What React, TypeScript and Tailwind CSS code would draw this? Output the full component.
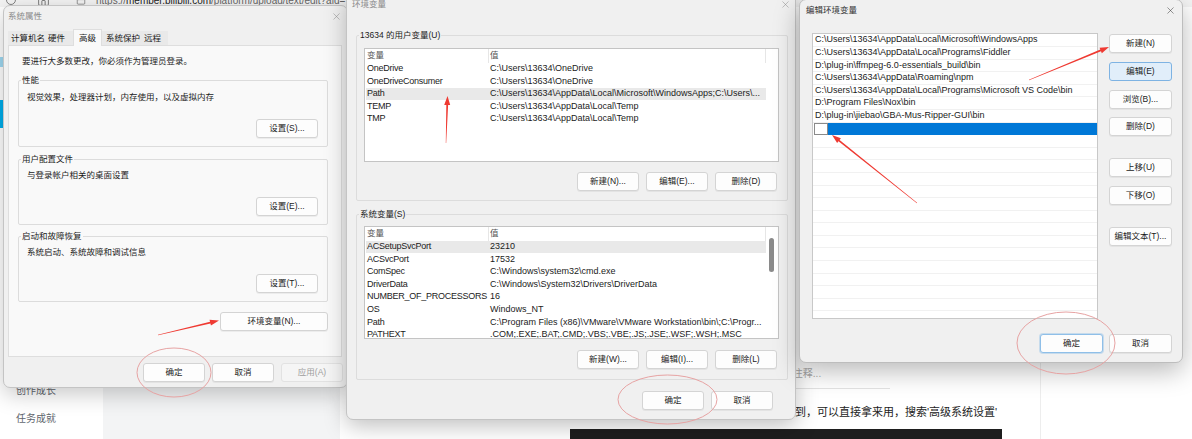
import React from "react";
import { X, RotateCw, Home, Lock } from "lucide-react";

type Pt = [number, number];

function arrowPoints(a: Pt, b: Pt, head = 9, headW = 6, tailW = 0.4, shaftW = 1.8) {
  const dx = b[0] - a[0];
  const dy = b[1] - a[1];
  const len = Math.hypot(dx, dy);
  const ux = dx / len;
  const uy = dy / len;
  const nx = -uy;
  const ny = ux;
  const bx = b[0] - ux * head;
  const by = b[1] - uy * head;
  const p = (x: number, y: number) => `${x.toFixed(2)},${y.toFixed(2)}`;
  return [
    p(a[0] + (nx * tailW) / 2, a[1] + (ny * tailW) / 2),
    p(bx + (nx * shaftW) / 2, by + (ny * shaftW) / 2),
    p(bx + (nx * headW) / 2, by + (ny * headW) / 2),
    p(b[0], b[1]),
    p(bx - (nx * headW) / 2, by - (ny * headW) / 2),
    p(bx - (nx * shaftW) / 2, by - (ny * shaftW) / 2),
    p(a[0] - (nx * tailW) / 2, a[1] - (ny * tailW) / 2),
  ].join(" ");
}

type BtnKind = "default" | "disabled" | "focus" | "active";

function Btn({ className, kind = "default", children }: { className: string; kind?: BtnKind; children: React.ReactNode }) {
  const base = "flex h-[19px] shrink-0 items-center justify-center rounded-[3px] border text-[8.5px] leading-none";
  const styles: Record<BtnKind, string> = {
    default: "border-[#d4d4d4] bg-[#fdfdfd] text-[#1b1b1b] shadow-[0_1px_0_rgba(0,0,0,0.05)]",
    disabled: "border-[#e2e2e2] bg-[#f5f5f5] text-[#9d9d9d]",
    focus: "border-[#8fbfe8] bg-[#fdfdfd] text-[#1b1b1b] shadow-[0_0_0_1px_rgba(120,180,230,0.35)]",
    active: "border-[#7eb3e3] bg-[#e1eefa] text-[#1b1b1b]",
  };
  return <div className={`${base} ${styles[kind]} ${className}`}>{children}</div>;
}

function Group({ label, className, children }: { label: string; className: string; children: React.ReactNode }) {
  return (
    <fieldset className={`rounded-[2px] border border-[#dcdcdc] ${className}`}>
      <legend className="ml-[2px] px-[1px] text-[8.5px] leading-[12px] text-[#1b1b1b]">{label}</legend>
      {children}
    </fieldset>
  );
}

function CloseX({ className }: { className: string }) {
  return <X className={className} size={11} strokeWidth={1.1} />;
}

const userRows: [string, string][] = [
  ["OneDrive", "C:\\Users\\13634\\OneDrive"],
  ["OneDriveConsumer", "C:\\Users\\13634\\OneDrive"],
  ["Path", "C:\\Users\\13634\\AppData\\Local\\Microsoft\\WindowsApps;C:\\Users\\..."],
  ["TEMP", "C:\\Users\\13634\\AppData\\Local\\Temp"],
  ["TMP", "C:\\Users\\13634\\AppData\\Local\\Temp"],
];

const sysRows: [string, string][] = [
  ["ACSetupSvcPort", "23210"],
  ["ACSvcPort", "17532"],
  ["ComSpec", "C:\\Windows\\system32\\cmd.exe"],
  ["DriverData", "C:\\Windows\\System32\\Drivers\\DriverData"],
  ["NUMBER_OF_PROCESSORS", "16"],
  ["OS", "Windows_NT"],
  ["Path", "C:\\Program Files (x86)\\VMware\\VMware Workstation\\bin\\;C:\\Progr..."],
  ["PATHEXT", ".COM;.EXE;.BAT;.CMD;.VBS;.VBE;.JS;.JSE;.WSF;.WSH;.MSC"],
];

const paths = [
  "C:\\Users\\13634\\AppData\\Local\\Microsoft\\WindowsApps",
  "C:\\Users\\13634\\AppData\\Local\\Programs\\Fiddler",
  "D:\\plug-in\\ffmpeg-6.0-essentials_build\\bin",
  "C:\\Users\\13634\\AppData\\Roaming\\npm",
  "C:\\Users\\13634\\AppData\\Local\\Programs\\Microsoft VS Code\\bin",
  "D:\\Program Files\\Nox\\bin",
  "D:\\plug-in\\jiebao\\GBA-Mus-Ripper-GUI\\bin",
];

function VarList({ rows, selected, className, scroll }: { rows: [string, string][]; selected: number; className: string; scroll?: boolean }) {
  return (
    <div className={`relative overflow-hidden border border-[#c4c4c4] bg-white text-[9px] ${className}`}>
      <div className="ml-[1px] flex h-[13.5px] w-[400px] items-stretch text-[8.5px] text-[#555]">
        <div className="flex w-[123px] items-center border-r border-[#e6e6e6] pl-[1px]">变量</div>
        <div className="flex flex-1 items-center border-r border-[#e6e6e6] pl-[1px]">值</div>
      </div>
      {rows.map((r, i) => (
        <div key={i} className={`ml-[1px] flex h-[12.6px] w-[400px] items-center text-[#1b1b1b] ${i === selected ? "bg-[#e9e9e9]" : ""}`}>
          <div className="w-[123px] overflow-hidden whitespace-nowrap pl-[1px] tracking-[-0.25px]">{r[0]}</div>
          <div className="flex-1 overflow-hidden whitespace-nowrap pl-[1px]">{r[1]}</div>
        </div>
      ))}
      {scroll ? <div className="absolute right-[4px] top-[11px] h-[34px] w-[5px] rounded-full bg-[#8a8a8a]" /> : null}
    </div>
  );
}

export default function App() {
  const red = "#ef3a32";
  const ring = "#e7a3a3";
  return (
    <div className="relative h-[439px] w-[1192px] overflow-hidden bg-white font-['Liberation_Sans','Noto_Sans_CJK_SC',sans-serif]">
      {/* background web page */}
      <div className="flex h-full flex-col">
        <div className="h-[7px] shrink-0 overflow-hidden bg-[#f4f4f4]">
          <div className="-mt-[8px] flex h-[16px] items-center text-[#555]">
            <RotateCw className="ml-[5px]" size={12} strokeWidth={1.4} />
            <Home className="ml-[20px]" size={13} strokeWidth={1.4} />
            <Lock className="ml-[26px]" size={10} strokeWidth={1.4} />
            <span className="ml-[10px] whitespace-nowrap text-[10px] text-[#666]">
              https://<span className="text-[#222]">member.bilibili.com</span>/platform/upload/text/edit?aid=
            </span>
          </div>
        </div>
        <div className="flex min-h-0 flex-1 overflow-hidden">
          <aside className="flex w-[103px] shrink-0 flex-col bg-white text-[10px] text-[#61666d]">
            <div className="mt-[50px] h-[10px] w-[40px] bg-[#9fd9f2]" />
            <div className="mt-[33px] h-[28px] w-[103px] bg-[#00aeec]" />
            <div className="flex-1" />
            <div className="flex h-[28px] items-center justify-between pl-[16px] pr-[20px]">
              <span>创作成长</span>
              <span className="text-[8px] text-[#999]">ˇ</span>
            </div>
            <div className="mb-[7px] flex h-[28px] items-center pl-[16px]">任务成就</div>
          </aside>
          <main className="min-w-0 flex-1 overflow-hidden bg-[#f3f4f5] pl-[237px]">
            <div className="h-full w-[700px] bg-white pl-[230px]">
              <div className="flex w-[470px] flex-col pt-[360px]">
                <div className="pr-[16px] text-center text-[10px] leading-[14px] text-[#aaa]">添加注释...</div>
                <div className="mx-auto mt-[7px] h-px w-[170px] bg-[#e3e3e3]" />
                <p className="mt-[15px] whitespace-nowrap pl-[225px] text-[11px] leading-[16px] text-[#222]">到，可以直接拿来用，搜索'高级系统设置'</p>
                <div className="mt-[9px] h-[20px] w-[432px] bg-[#1e1e1e]" />
              </div>
            </div>
          </main>
          <div className="w-[152px] shrink-0 border-l border-[#ededed] bg-white" />
        </div>
      </div>

      {/* Window 1: 系统属性 */}
      <div className="absolute left-[3px] top-[5px] flex h-[383px] w-[345px] flex-col rounded-[7px] border border-[#c4c4c4] bg-[#f0f0f0] shadow-[0_6px_22px_rgba(0,0,0,0.22)]">
        <div className="flex h-[20px] shrink-0 items-center justify-between pl-[4px] pr-[5px]">
          <span className="text-[8.5px] text-[#8a8a8a]">系统属性</span>
          <CloseX className="text-[#8a8a8a]" />
        </div>
        <div className="ml-[4px] mt-[3px] flex h-[16px] items-end text-[8.5px] text-[#1b1b1b]">
          <div className="flex h-[14px] items-end bg-[#e9e9e9]">
            <div className="flex h-[14px] w-[39px] items-center pl-[3px]">计算机名</div>
            <div className="flex h-[14px] w-[26px] items-center pl-[1px]">硬件</div>
          </div>
          <div className="relative z-10 -mb-px flex h-[17px] w-[29px] items-center justify-center border-x border-t border-[#dedede] bg-[#f9f9f9]">高级</div>
          <div className="flex h-[14px] items-end bg-[#e9e9e9]">
            <div className="flex h-[14px] w-[40px] items-center pl-[4px]">系统保护</div>
            <div className="flex h-[14px] w-[26px] items-center pl-[2px]">远程</div>
          </div>
        </div>
        <div className="ml-[4px] mr-[5px] flex h-[312px] flex-col border border-[#dedede] bg-[#f9f9f9] pl-[9px] pr-[13px] pt-[10px] text-[8.5px] text-[#1b1b1b]">
          <p className="ml-[4px] leading-[11px]">要进行大多数更改，你必须作为管理员登录。</p>
          <Group label="性能" className="mt-[7px] pb-[8px]">
            <p className="ml-[8px] mt-[6px] leading-[11px]">视觉效果，处理器计划，内存使用，以及虚拟内存</p>
            <div className="mr-[9px] mt-[16px] flex justify-end">
              <Btn className="w-[62px]">设置(S)...</Btn>
            </div>
          </Group>
          <Group label="用户配置文件" className="mt-[6px] pb-[8px]">
            <p className="ml-[8px] mt-[5px] leading-[11px]">与登录帐户相关的桌面设置</p>
            <div className="mr-[9px] mt-[16px] flex justify-end">
              <Btn className="w-[62px]">设置(E)...</Btn>
            </div>
          </Group>
          <Group label="启动和故障恢复" className="mt-[5px] pb-[8px]">
            <p className="ml-[8px] mt-[5px] leading-[11px]">系统启动、系统故障和调试信息</p>
            <div className="mr-[9px] mt-[16px] flex justify-end">
              <Btn className="w-[62px]">设置(T)...</Btn>
            </div>
          </Group>
          <div className="mt-[10px] flex justify-end">
            <Btn className="w-[108px]">环境变量(N)...</Btn>
          </div>
        </div>
        <div className="mt-[6px] flex justify-end gap-[7px] pr-[4px]">
          <Btn className="w-[62px]">确定</Btn>
          <Btn className="w-[62px]">取消</Btn>
          <Btn className="w-[62px]" kind="disabled">应用(A)</Btn>
        </div>
      </div>

      {/* Window 2: 环境变量 */}
      <div className="absolute left-[346px] top-[-8px] flex h-[428px] w-[450px] flex-col rounded-[7px] border border-[#c4c4c4] bg-[#f0f0f0] shadow-[0_6px_22px_rgba(0,0,0,0.25)]">
        <div className="flex h-[22px] shrink-0 items-center justify-between pl-[5px] pr-[4px]">
          <span className="text-[8.5px] text-[#8a8a8a]">环境变量</span>
          <CloseX className="text-[#8a8a8a]" />
        </div>
        <Group label="13634 的用户变量(U)" className="ml-[9px] mr-[7px] mt-[14px] pb-[9px]">
          <VarList rows={userRows} selected={2} className="ml-[7px] mr-[8px] mt-[7px] h-[114px]" />
          <div className="mr-[10px] mt-[10px] flex justify-end gap-[7px]">
            <Btn className="w-[62px]">新建(N)...</Btn>
            <Btn className="w-[62px]">编辑(E)...</Btn>
            <Btn className="w-[62px]">删除(D)</Btn>
          </div>
        </Group>
        <Group label="系统变量(S)" className="ml-[9px] mr-[7px] mt-[7px] pb-[10px]">
          <VarList rows={sysRows} selected={0} className="ml-[7px] mr-[8px] mt-[6px] h-[113px]" scroll />
          <div className="mr-[10px] mt-[11px] flex justify-end gap-[7px]">
            <Btn className="w-[62px]">新建(W)...</Btn>
            <Btn className="w-[62px]">编辑(I)...</Btn>
            <Btn className="w-[62px]">删除(L)</Btn>
          </div>
        </Group>
        <div className="mt-[11px] flex justify-end gap-[7px] pr-[22px]">
          <Btn className="w-[62px]">确定</Btn>
          <Btn className="w-[62px]">取消</Btn>
        </div>
      </div>

      {/* Window 3: 编辑环境变量 */}
      <div className="absolute left-[799px] top-[-1px] flex h-[364px] w-[384px] flex-col rounded-[7px] border border-[#bdbdbd] bg-[#f0f0f0] shadow-[0_8px_26px_rgba(0,0,0,0.28)]">
        <div className="flex h-[21px] shrink-0 items-center justify-between pl-[6px] pr-[6px]">
          <span className="text-[8.5px] text-[#333]">编辑环境变量</span>
          <CloseX className="text-[#333]" />
        </div>
        <div className="mt-[12px] flex pl-[12px]">
          <div className="h-[286px] w-[286px] overflow-hidden border border-[#c8c8c8] bg-white pt-[0.4px] text-[9px] text-[#1b1b1b]">
            {paths.map((p, i) => (
              <div key={i} className="flex h-[12.6px] items-center whitespace-nowrap border-b border-[#f1f1f1] pl-[2px]">{p}</div>
            ))}
            <div className="flex h-[12.6px] items-stretch">
              <div className="ml-[1px] w-[14px] border border-[#8a8a8a] bg-white" />
              <div className="flex-1 bg-[#0078d7]" />
            </div>
            {Array.from({ length: 16 }).map((_, i) => (
              <div key={i} className="h-[12.6px] border-b border-[#f1f1f1]" />
            ))}
          </div>
          <div className="ml-[11px] flex w-[63px] flex-col pt-[1px]">
            <Btn className="w-[63px]">新建(N)</Btn>
            <Btn className="mt-[8.5px] w-[63px]" kind="active">编辑(E)</Btn>
            <Btn className="mt-[9px] w-[63px]">浏览(B)...</Btn>
            <Btn className="mt-[8.5px] w-[63px]">删除(D)</Btn>
            <Btn className="mt-[22px] w-[63px]">上移(U)</Btn>
            <Btn className="mt-[9px] w-[63px]">下移(O)</Btn>
            <Btn className="mt-[22px] w-[63px]">编辑文本(T)...</Btn>
          </div>
        </div>
        <div className="mt-[15px] flex justify-end gap-[6px] pr-[10px]">
          <Btn className="w-[63px]" kind="focus">确定</Btn>
          <Btn className="w-[63px]">取消</Btn>
        </div>
      </div>

      {/* annotations */}
      <svg className="pointer-events-none absolute left-0 top-0" width={1192} height={439} viewBox="0 0 1192 439">
        <ellipse cx={174} cy={372.5} rx={37} ry={24.5} fill="none" stroke={ring} strokeWidth={1} />
        <ellipse cx={667.5} cy={399.5} rx={49.5} ry={24.5} fill="none" stroke={ring} strokeWidth={1} />
        <ellipse cx={1066} cy={343} rx={49} ry={31} fill="none" stroke={ring} strokeWidth={1} />
        <polygon points={arrowPoints([158, 335], [219, 320.5])} fill={red} />
        <polygon points={arrowPoints([446, 143], [447.5, 96])} fill={red} />
        <polygon points={arrowPoints([1029, 80], [1109, 47])} fill={red} />
        <polygon points={arrowPoints([917, 203], [832, 135])} fill={red} />
      </svg>
    </div>
  );
}
